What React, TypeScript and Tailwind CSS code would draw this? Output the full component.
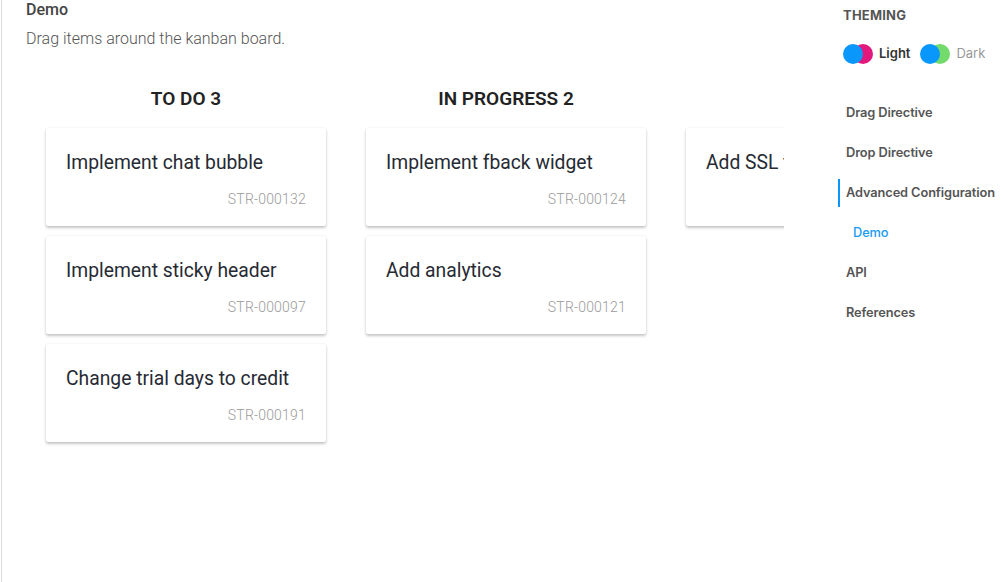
import React from 'react';

type Card = { title: string; id: string };
type Column = { name: string; cards: Card[] };

const columns: Column[] = [
  {
    name: 'TO DO',
    cards: [
      { title: 'Implement chat bubble', id: 'STR-000132' },
      { title: 'Implement sticky header', id: 'STR-000097' },
      { title: 'Change trial days to credit', id: 'STR-000191' },
    ],
  },
  {
    name: 'IN PROGRESS',
    cards: [
      { title: 'Implement fback widget', id: 'STR-000124' },
      { title: 'Add analytics', id: 'STR-000121' },
    ],
  },
  {
    name: 'DONE',
    cards: [{ title: 'Add SSL to site', id: 'STR-000110' }],
  },
];

const nav = [
  { label: 'Drag Directive' },
  { label: 'Drop Directive' },
  { label: 'Advanced Configuration', active: true },
  { label: 'Demo', sub: true },
  { label: 'API' },
  { label: 'References' },
];

const KanbanCard: React.FC<{ card: Card }> = ({ card }) => (
  <div className="w-[280px] h-[98px] bg-white rounded-[2px] shadow-[0_2px_3px_rgba(0,0,0,0.22),0_0_2px_rgba(0,0,0,0.08)] px-5 pt-[21px] flex flex-col">
    <div className="text-[19.3px] leading-7 text-[#262a33] whitespace-nowrap">{card.title}</div>
    <div className="mt-[12px] text-[14px] leading-5 text-[#9a9a9a] font-light text-right tracking-[0.2px]">{card.id}</div>
  </div>
);

const ThemeDot: React.FC<{ second: string }> = ({ second }) => (
  <span className="relative inline-block w-[30px] h-5">
    <span className={`absolute left-[10px] top-0 w-5 h-5 rounded-full ${second}`} />
    <span className="absolute left-0 top-0 w-5 h-5 rounded-full bg-[#0a97fb]" />
  </span>
);

export default function App() {
  return (
    <div className="flex w-[1008px] h-[582px] bg-white overflow-hidden">
      <main
        className="ml-px w-[783px] shrink-0 border-l border-[#dcdcdc] overflow-hidden pl-6"
        style={{ fontFamily: 'Roboto, "Liberation Sans", sans-serif' }}
      >
        <h2 className="text-[16px] leading-5 font-medium text-[#444]">Demo</h2>
        <p className="mt-[9px] text-[16px] leading-5 font-light text-[#555]">Drag items around the kanban board.</p>
        <div className="mt-[37px] pl-5 flex gap-10">
          {columns.map((col) => (
            <div key={col.name} className="w-[280px] shrink-0">
              <h3 className="pt-px text-center text-[19px] leading-6 font-semibold text-[#222] whitespace-nowrap">
                {col.name} {col.cards.length}
              </h3>
              <div className="mt-[17px] flex flex-col gap-[10px]">
                {col.cards.map((c) => (
                  <KanbanCard key={c.id} card={c} />
                ))}
              </div>
            </div>
          ))}
        </div>
      </main>
      <aside
        className="flex-1 pl-[54px] pt-[6px]"
        style={{ fontFamily: 'Inter, "Liberation Sans", sans-serif' }}
      >
        <div className="pl-[5px]">
          <div className="text-[13px] leading-[18px] font-bold text-[#555] tracking-[0.2px]">THEMING</div>
          <div className="mt-[20px] flex items-center text-[13px]">
            <ThemeDot second="bg-[#e3187c]" />
            <span className="ml-[6px] font-semibold text-[#333]">Light</span>
            <span className="ml-[10px]" />
            <ThemeDot second="bg-[#72db6b]" />
            <span className="ml-[6px] text-[#999]">Dark</span>
          </div>
        </div>
        <ul className="mt-[29px]">
          {nav.map((n) => (
            <li key={n.label} className="h-10 flex items-center">
              <div
                className={`h-7 flex items-center border-l-2 text-[12.8px] tracking-[-0.1px] whitespace-nowrap ${
                  n.active ? 'border-[#0a97fb]' : 'border-transparent'
                } ${n.sub ? 'pl-[13px] text-[#1a9bf4] font-medium' : 'pl-[6px] text-[#555] font-semibold'}`}
              >
                {n.label}
              </div>
            </li>
          ))}
        </ul>
      </aside>
    </div>
  );
}
